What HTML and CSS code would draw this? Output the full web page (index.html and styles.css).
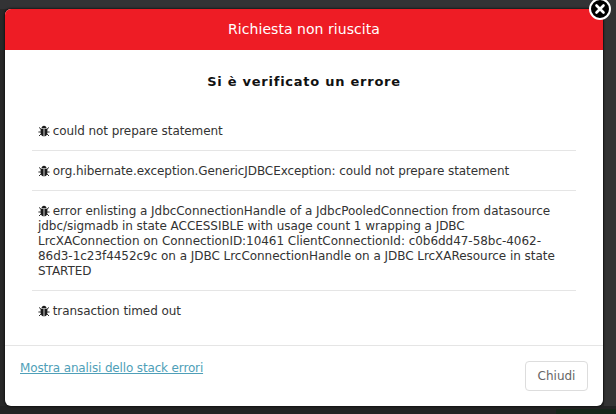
FILE: index.html

```html
<!DOCTYPE html>
<html lang="en">
<head>
  <meta charset="UTF-8" />
  <meta name="viewport" content="width=device-width, initial-scale=1.0"/>
  <title>Richiesta non riuscita</title>
  <link rel="stylesheet" href="styles.css">
</head>
<body>
  <svg class="sprites" width="0" height="0">
    <symbol id="bug" viewBox="0 0 12 12">
      <path d="M3.5 3.2C3.5 1.7 4.6.8 6 .8s2.5.9 2.5 2.4z" fill="#1a1a1a"/>
      <path d="M2.6 3.8h3v7.7C3.8 11.3 2.6 9.8 2.6 7.6zM6.4 3.8h3v3.8c0 2.2-1.2 3.7-3 3.9z" fill="#1a1a1a"/>
      <path d="M1 2.4 3 4.2M11 2.4 9 4.2M.4 7h2.4M9.2 7h2.4M1 11l2-2M11 11 9 9" stroke="#1a1a1a" stroke-width=".9" fill="none"/>
    </symbol>
  </svg>

  <div class="modal">
    <div class="modal-header">Richiesta non riuscita</div>
    <div class="modal-body">
      <h4 class="modal-title">Si è verificato un errore</h4>
      <ul class="errors">
        <li><svg class="bug"><use href="#bug"/></svg> could not prepare statement</li>
        <li><svg class="bug"><use href="#bug"/></svg> org.hibernate.exception.GenericJDBCException: could not prepare statement</li>
        <li class="long"><svg class="bug"><use href="#bug"/></svg> error enlisting a JdbcConnectionHandle of a JdbcPooledConnection from datasource jdbc/sigmadb in state ACCESSIBLE with usage count 1 wrapping a JDBC LrcXAConnection on ConnectionID:10461 ClientConnectionId: c0b6dd47-58bc-4062-86d3-1c23f4452c9c on a JDBC LrcConnectionHandle on a JDBC LrcXAResource in state STARTED</li>
        <li><svg class="bug"><use href="#bug"/></svg> transaction timed out</li>
      </ul>
    </div>
    <div class="modal-footer">
      <a class="stack-link" href="#">Mostra analisi dello stack errori</a>
      <button class="btn">Chiudi</button>
    </div>
    <button class="close" aria-label="Chiudi">
      <svg viewBox="0 0 12 12" width="12" height="12"><path d="M2.5 2.5l7 7M9.5 2.5l-7 7" stroke="#fff" stroke-width="2.6" stroke-linecap="round"/></svg>
    </button>
  </div>
</body>
</html>
```

FILE: styles.css

```css
* {
  box-sizing: border-box;
}
html, body {
  height: 100%;
}
body {
  margin: 0;
  padding: 9px 13px 8px 5px;
  background:
    linear-gradient(#16261a, #16261a) right bottom / 60px 5px no-repeat,
    linear-gradient(#232323, #232323) left bottom / 100% 8px no-repeat,
    linear-gradient(#333, #333) right top / 12px 100% no-repeat,
    linear-gradient(#333335, #333335) left top / 100% 9px no-repeat,
    #282828;
  font-family: "DejaVu Sans", Verdana, sans-serif;
  font-size: 12px;
  line-height: 15px;
  color: #333;
  overflow: hidden;
}
.sprites {
  position: absolute;
}
.modal {
  position: relative;
  height: 397px;
  display: flex;
  flex-direction: column;
  background: #fff;
  border-radius: 6px;
  box-shadow: 0 0 2px 1px rgba(0, 0, 0, .5);
}
.modal-header {
  height: 41px;
  line-height: 41px;
  background: #ee1c25;
  border-radius: 6px 6px 0 0;
  color: #fff;
  text-align: center;
  font-size: 14px;
  letter-spacing: .05px;
}
.modal-body {
  flex: 1;
  padding: 0 27px;
}
.modal-title {
  margin: 24px 0 22px;
  font-size: 13px;
  line-height: 15px;
  text-align: center;
  color: #111;
  letter-spacing: .75px;
}
.errors {
  list-style: none;
  margin: 0;
  padding: 0;
  letter-spacing: -.08px;
}
.errors li {
  padding: 13px 14px 11px 6px;
  border-top: 1px solid #e5e5e5;
}
.errors li:first-child {
  border-top: 0;
}
.errors li.long {
  letter-spacing: -.04px;
}
.bug {
  width: 12px;
  height: 12px;
  margin-right: -1px;
  vertical-align: -2px;
}
.modal-footer {
  height: 61px;
  display: flex;
  justify-content: space-between;
  align-items: flex-start;
  padding: 15px 15px 0;
  border-top: 1px solid #e5e5e5;
}
.stack-link {
  color: #4f9fb8;
  letter-spacing: -.15px;
  text-decoration: underline;
}
.btn {
  height: 30px;
  width: 63px;
  font: inherit;
  color: #666;
  background: #fff;
  border: 1px solid #ddd;
  border-radius: 4px;
}
.close {
  position: absolute;
  top: -11px;
  right: -8px;
  width: 22px;
  height: 22px;
  padding: 0;
  display: flex;
  align-items: center;
  justify-content: center;
  background: #000;
  border: 2px solid #fff;
  border-radius: 50%;
}
```
